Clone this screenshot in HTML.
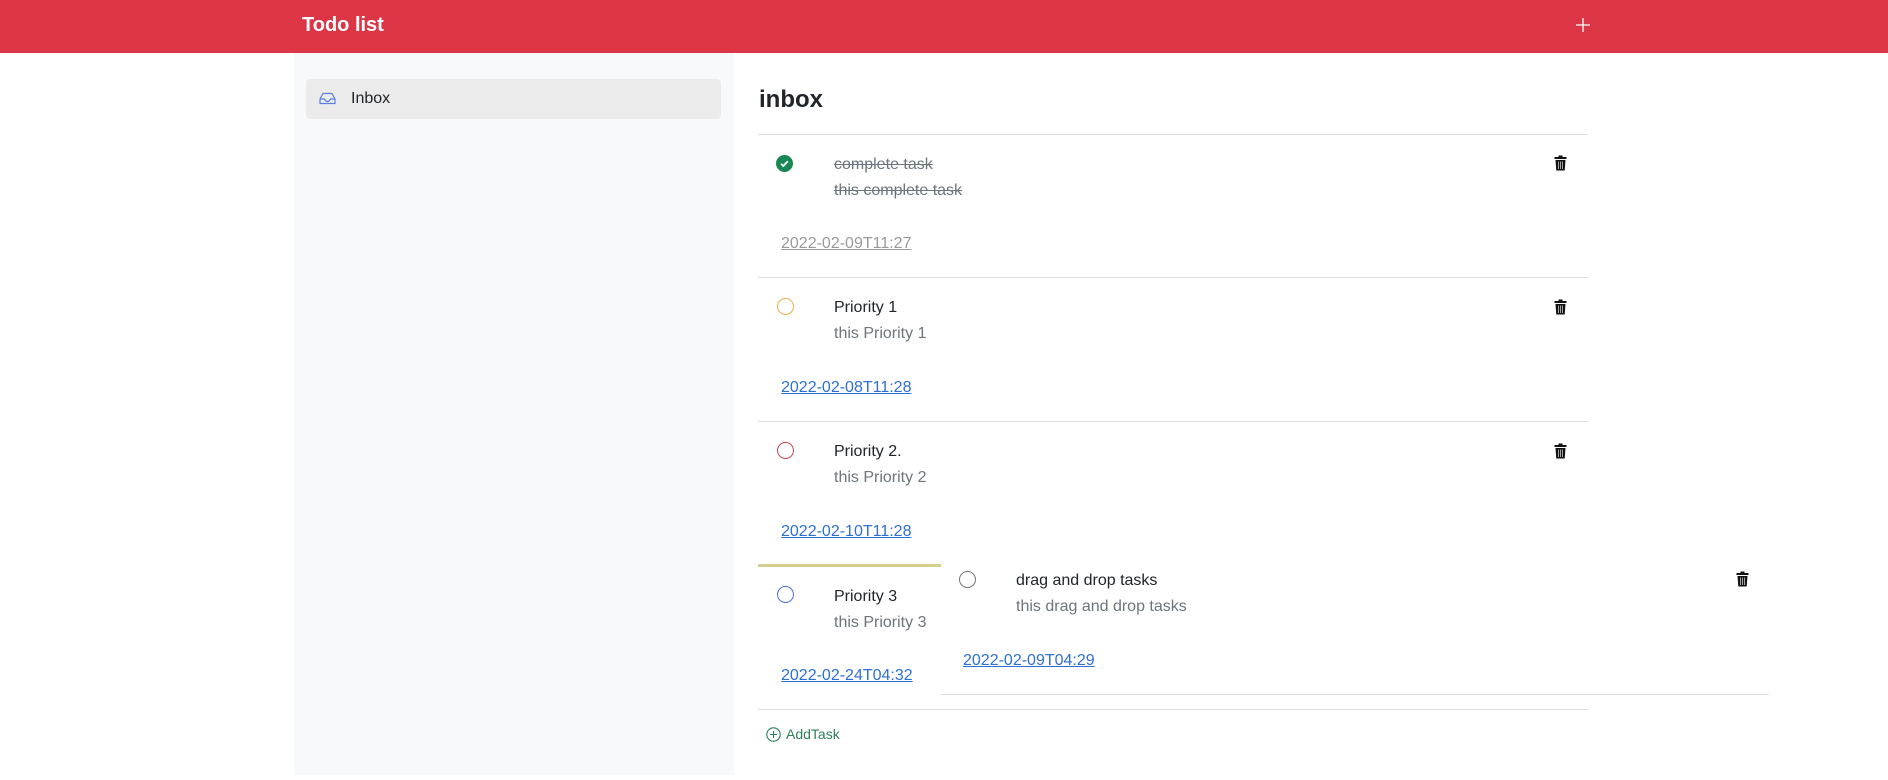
<!DOCTYPE html>
<html><head><meta charset="utf-8"><style>
*{box-sizing:border-box;margin:0;padding:0}
body{width:1888px;height:780px;overflow:hidden;background:#fff;font-family:"Segoe UI","Liberation Sans",sans-serif;font-size:16px;color:#212529;position:relative}
.hdr{position:absolute;left:0;top:0;width:1888px;height:53px;background:#dc3545}
.hdr .t{position:absolute;left:302px;top:11px;color:#fff;font-weight:bold;font-size:20px;line-height:28px}
.hdr .p{position:absolute;left:1574px;top:16px}
.side{position:absolute;left:294px;top:53px;width:440px;height:722px;background:#f8f9fa}
.inb{position:absolute;left:306px;top:79px;width:415px;height:40px;background:#ebebeb;border-radius:4px}
.inb span{position:absolute;left:45px;top:8px;line-height:24px;font-size:16px;color:#212529}
.inb svg{position:absolute;left:13px;top:13px}
h2{position:absolute;left:759px;top:83px;font-size:24px;font-weight:bold;line-height:34px;color:#212529}
.line{position:absolute;height:1px;background:#dedede}
.a{position:absolute;line-height:24px;white-space:nowrap}
.ti{color:#212529}
.de{color:#6c757d}
.dt{text-decoration:underline;color:#2f6fd6}
.cir{position:absolute;width:17px;height:17px;border-radius:50%;border:1.3px solid}
.trash{position:absolute}
</style></head><body>
<div class="hdr"><div class="t">Todo list</div>
<svg class="p" width="18" height="18" viewBox="0 0 18 18"><path d="M9 2v14M2 9h14" stroke="#fff" stroke-width="1.3"/></svg></div>
<div class="side"></div>
<div class="inb"><svg width="17" height="13" viewBox="0 0 17 13"><path d="M1 7 L4 1.5 H13 L16 7 V11.5 H1 Z M1 7 H5.5 Q6.5 9.5 8.5 9.5 Q10.5 9.5 11.5 7 H16" fill="none" stroke="#5b7fd8" stroke-width="1.2" stroke-linejoin="round"/></svg><span>Inbox</span></div>
<h2>inbox</h2>
<div class="line" style="left:758px;top:134px;width:830px"></div>
<div class="line" style="left:758px;top:277px;width:830px"></div>
<div class="line" style="left:758px;top:421px;width:830px"></div>
<div style="position:absolute;left:758px;top:564px;width:183px;height:3px;background:#d4d090"></div>
<div class="line" style="left:941px;top:694px;width:828px"></div>
<div class="line" style="left:758px;top:709px;width:830px"></div>

<svg style="position:absolute;left:776px;top:155px" width="17" height="17" viewBox="0 0 17 17"><circle cx="8.5" cy="8.5" r="8.5" fill="#198754"/><path d="M5 8.7l2.3 2.3 4.5-4.7" fill="none" stroke="#fff" stroke-width="1.8"/></svg>
<div class="a de" style="left:834px;top:153px;text-decoration:line-through">complete task</div>
<div class="a de" style="left:834px;top:179px;text-decoration:line-through">this complete task</div>
<div class="a" style="left:781px;top:232px;color:#9a9a9a;text-decoration:underline">2022-02-09T11:27</div>

<div class="cir" style="left:777px;top:298px;border-color:#f0b04a"></div>
<div class="a ti" style="left:834px;top:296px">Priority 1</div>
<div class="a de" style="left:834px;top:322px">this Priority 1</div>
<div class="a dt" style="left:781px;top:376px">2022-02-08T11:28</div>

<div class="cir" style="left:777px;top:442px;border-color:#c9474f"></div>
<div class="a ti" style="left:834px;top:440px">Priority 2.</div>
<div class="a de" style="left:834px;top:466px">this Priority 2</div>
<div class="a dt" style="left:781px;top:520px">2022-02-10T11:28</div>

<div class="cir" style="left:777px;top:586px;border-color:#4a72d6"></div>
<div class="a ti" style="left:834px;top:585px">Priority 3</div>
<div class="a de" style="left:834px;top:611px">this Priority 3</div>
<div class="a dt" style="left:781px;top:664px">2022-02-24T04:32</div>

<div style="position:absolute;left:941px;top:567px;width:828px;height:127px;background:#fff"></div>
<div class="cir" style="left:959px;top:571px;border-color:#777"></div>
<div class="a ti" style="left:1016px;top:569px">drag and drop tasks</div>
<div class="a de" style="left:1016px;top:595px">this drag and drop tasks</div>
<div class="a dt" style="left:963px;top:649px">2022-02-09T04:29</div>

<svg class="trash" style="left:1554px;top:155px" width="13" height="16" viewBox="0 0 13 16"><path d="M4.5 0.5h4v1.5h4v2h-12v-2h4z M1.5 5h10l-0.8 10.5h-8.4z" fill="#111"/><path d="M4.5 6.5v7.5M6.5 6.5v7.5M8.5 6.5v7.5" stroke="#ccc" stroke-width="0.8"/></svg>
<svg class="trash" style="left:1554px;top:299px" width="13" height="16" viewBox="0 0 13 16"><path d="M4.5 0.5h4v1.5h4v2h-12v-2h4z M1.5 5h10l-0.8 10.5h-8.4z" fill="#111"/><path d="M4.5 6.5v7.5M6.5 6.5v7.5M8.5 6.5v7.5" stroke="#ccc" stroke-width="0.8"/></svg>
<svg class="trash" style="left:1554px;top:443px" width="13" height="16" viewBox="0 0 13 16"><path d="M4.5 0.5h4v1.5h4v2h-12v-2h4z M1.5 5h10l-0.8 10.5h-8.4z" fill="#111"/><path d="M4.5 6.5v7.5M6.5 6.5v7.5M8.5 6.5v7.5" stroke="#ccc" stroke-width="0.8"/></svg>
<svg class="trash" style="left:1736px;top:571px" width="13" height="16" viewBox="0 0 13 16"><path d="M4.5 0.5h4v1.5h4v2h-12v-2h4z M1.5 5h10l-0.8 10.5h-8.4z" fill="#111"/><path d="M4.5 6.5v7.5M6.5 6.5v7.5M8.5 6.5v7.5" stroke="#ccc" stroke-width="0.8"/></svg>

<svg style="position:absolute;left:766px;top:727px" width="15" height="15" viewBox="0 0 15 15"><circle cx="7.5" cy="7.5" r="6.7" fill="none" stroke="#2e7d5b" stroke-width="1.1"/><path d="M7.5 4v7M4 7.5h7" stroke="#2e7d5b" stroke-width="1.1"/></svg>
<div class="a" style="left:786px;top:723px;font-size:14px;line-height:22px;color:#2e7d5b">AddTask</div>
</body></html>
